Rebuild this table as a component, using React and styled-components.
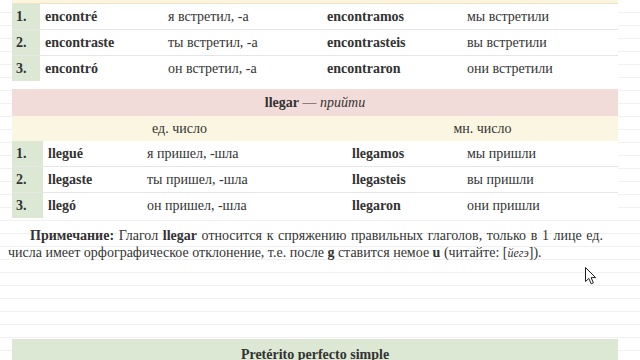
import styled, { createGlobalStyle } from "styled-components";

const Global = createGlobalStyle`
html, body {
  margin: 0;
  padding: 0;
}
body {
  width: 640px;
  height: 360px;
  overflow: hidden;
  font-family: "Liberation Serif", "DejaVu Serif", serif;
  color: #333;
  background-color: #fff;
  background-image: repeating-linear-gradient(
    to bottom,
    transparent 0px,
    transparent 12px,
    #f1f1f1 12px,
    #f1f1f1 13px
  );
}
`

const Page = styled.div`
position: relative;
width: 640px;
height: 360px;
overflow: hidden;
padding-left: 12px;
box-sizing: border-box;
`

const Table = styled.table`
width: 606px;
border-collapse: collapse;
table-layout: fixed;
font-family: "Liberation Serif", "DejaVu Serif", serif;
font-size: 14px;
color: #333;
margin-top: ${p => p.$offset || 0}px;
`

const Strip = styled.div`
width: 606px;
height: 3px;
background: #fbf4df;
border-bottom: 1px solid #f1e2c4;
`

const Head = styled.td`
height: ${p => p.$h || 26}px;
padding: ${p => p.$pt || 0}px 0 0;
text-align: center;
vertical-align: ${p => p.$pt ? "top" : "middle"};
background: ${p => p.$bg};
font-weight: ${p => p.$bold ? "bold" : "normal"};
`

const Row = styled.tr`
background: #fff;
border-bottom: 1px solid #e6e6e6;
&:last-child { border-bottom: none; }
`

const Num = styled.td`
height: ${p => p.$h}px;
padding: 0 0 0 4px;
background: #dce8d4;
font-weight: bold;
`

const Word = styled.td`
padding: 0 0 0 5px;
font-weight: bold;
white-space: nowrap;
`

const Trans = styled.td`
padding: 0 0 0 5px;
white-space: nowrap;
`

const Note = styled.div`
margin: 9px 0 0 -4px;
width: 595px;
font-size: 14px;
line-height: 17px;
`

const NoteLine = styled.div`
text-align: ${p => p.$full ? "justify" : "left"};
text-align-last: ${p => p.$full ? "justify" : "left"};
padding-left: ${p => p.$indent ? 22 : 0}px;
`

const Ipa = styled.i`
font-size: 12px;
`

const Cursor = styled.svg`
position: absolute;
left: 585px;
top: 267px;
`

const first = [
  ["1.", "encontré", "я встретил, -а", "encontramos", "мы встретили"],
  ["2.", "encontraste", "ты встретил, -а", "encontrasteis", "вы встретили"],
  ["3.", "encontró", "он встретил, -а", "encontraron", "они встретили"],
]

const second = [
  ["1.", "llegué", "я пришел, -шла", "llegamos", "мы пришли"],
  ["2.", "llegaste", "ты пришел, -шла", "llegasteis", "вы пришли"],
  ["3.", "llegó", "он пришел, -шла", "llegaron", "они пришли"],
]

function Cols({ widths }) {
  return (
    <colgroup>
      {widths.map((w, i) => <col key={i} style={{ width: w }} />)}
    </colgroup>
  )
}

function Rows({ data, h }) {
  return data.map(r => (
    <Row key={r[0]}>
      <Num $h={h}>{r[0]}</Num>
      <Word>{r[1]}</Word>
      <Trans>{r[2]}</Trans>
      <Word>{r[3]}</Word>
      <Trans>{r[4]}</Trans>
    </Row>
  ))
}

export default function App() {
  return (
    <Page>
      <Global />
      <Strip />
      <Table>
        <Cols widths={[28, 123, 159, 140, 156]} />
        <tbody>
          <Rows data={first} h={25} />
        </tbody>
      </Table>

      <Table $offset={8}>
        <Cols widths={[31, 99, 205, 115, 156]} />
        <tbody>
          <tr>
            <Head colSpan={5} $bg="#f2dcda" $h={27}>
              <b>llegar</b> — <i>прийти</i>
            </Head>
          </tr>
          <tr>
            <Head colSpan={3} $bg="#fbf6e2" $h={25}>ед. число</Head>
            <Head colSpan={2} $bg="#fbf6e2" $h={25}>мн. число</Head>
          </tr>
          <Rows data={second} h={25} />
        </tbody>
      </Table>

      <Note>
        <NoteLine $indent $full>
          <b>Примечание:</b> Глагол <b>llegar</b> относится к спряжению правильных глаголов, только в 1 лице ед.
        </NoteLine>
        <NoteLine>
          числа имеет орфографическое отклонение, т.е. после <b>g</b> ставится немое <b>u</b> (читайте: [<Ipa>йегэ</Ipa>]).
        </NoteLine>
      </Note>

      <Table $offset={77}>
        <tbody>
          <tr>
            <Head $bg="#dce8d4" $h={22} $pt={8} $bold>Pretérito perfecto simple</Head>
          </tr>
        </tbody>
      </Table>

      <Cursor width="12" height="18" viewBox="0 0 12 18">
        <path d="M0.5 0.5 L0.5 14.5 L3.8 11.4 L6.2 16.8 L8.4 15.8 L6.1 10.6 L10.6 10.6 Z" fill="#fff" stroke="#222" strokeWidth="1" strokeLinejoin="round" />
      </Cursor>
    </Page>
  )
}
